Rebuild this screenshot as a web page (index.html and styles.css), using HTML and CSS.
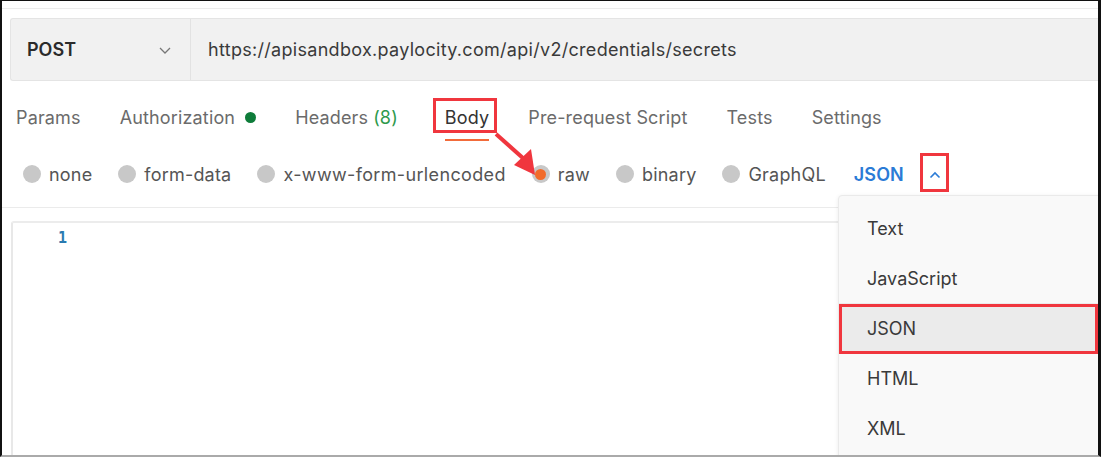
FILE: index.html
```html
<!DOCTYPE html>
<html>
<head>
<meta charset="utf-8">
<link rel="stylesheet" href="styles.css">
</head>
<body>
<div class="frame">
  <div class="topline"></div>
  <div class="urlbar">
    <div class="method">
      <span class="method-name">POST</span>
      <svg class="chev" width="14" height="10" viewBox="0 0 14 10"><path d="M2 3 L7 8 L12 3" fill="none" stroke="#777" stroke-width="1.3"/></svg>
    </div>
    <div class="url">https://apisandbox.paylocity.com/api/v2/credentials/secrets</div>
  </div>
  <div class="tabs">
    <span class="tab">Params</span>
    <span class="tab">Authorization<i class="gdot"></i></span>
    <span class="tab">Headers <span class="green">(8)</span></span>
    <span class="tab active">Body<span class="uline"></span><span class="hl hl-body"></span></span>
    <span class="tab">Pre-request Script</span>
    <span class="tab">Tests</span>
    <span class="tab">Settings</span>
  </div>
  <div class="radios">
    <span class="radio"><i class="rc"></i>none</span>
    <span class="radio"><i class="rc"></i>form-data</span>
    <span class="radio wide"><i class="rc"></i>x-www-form-urlencoded</span>
    <span class="radio"><i class="rc on"></i>raw</span>
    <span class="radio"><i class="rc"></i>binary</span>
    <span class="radio"><i class="rc"></i>GraphQL</span>
    <span class="lang">JSON</span>
    <span class="caret">
      <svg width="14" height="10" viewBox="0 0 14 10"><path d="M2.5 7.5 L7 3 L11.5 7.5" fill="none" stroke="#2b7bd6" stroke-width="1.6"/></svg>
      <span class="hl hl-caret"></span>
    </span>
  </div>
  <div class="sep"></div>
  <div class="editor">
    <span class="ln">1</span>
  </div>
  <div class="menu">
    <div class="item">Text</div>
    <div class="item">JavaScript</div>
    <div class="item sel">JSON<span class="hl hl-json"></span></div>
    <div class="item">HTML</div>
    <div class="item">XML</div>
  </div>
  <svg class="arrow" width="60" height="56" viewBox="0 0 60 56">
    <path d="M14 8 L42 33" stroke="#f0363e" stroke-width="4" fill="none"/>
    <path d="M53 49 L32 39 L49 23 Z" fill="#f0363e"/>
  </svg>
</div>
</body>
</html>
```
FILE: styles.css
```css
* { box-sizing: border-box; }
html, body { margin: 0; padding: 0; background: #fff; }
body { font-family: Inter, "Noto Sans", sans-serif; color: #333; }
.frame {
  position: relative;
  width: 1101px;
  height: 457px;
  border-left: 2px solid #111;
  border-top: 1px solid #111;
  border-right: 3px solid #111;
  border-bottom: 2px solid #aaa;
  overflow: hidden;
}
.topline { height: 5px; border-bottom: 1px solid #ececec; margin-top: 3px; }
.urlbar {
  display: flex;
  margin: 9px 0 0 8px;
  height: 63px;
  background: #f1f1f1;
  border: 1px solid #e4e4e4;
  border-right: none;
  border-radius: 3px 0 0 3px;
}
.method {
  width: 180px;
  display: flex;
  align-items: center;
  justify-content: space-between;
  padding: 0 18px 0 16px;
  border-right: 1px solid #e2e2e2;
}
.method-name { font-weight: 600; font-size: 18px; color: #2b2b2b; }
.chev { margin-top: 1px; }
.url {
  display: flex;
  align-items: center;
  padding-left: 17px;
  font-size: 18px;
  color: #3a3a3a;
  letter-spacing: 0.3px;
}
.tabs {
  display: flex;
  gap: 39px;
  margin: 14px 0 0 14px;
  height: 44px;
  align-items: center;
  font-size: 18px;
  color: #6b6b6b;
  letter-spacing: 0.15px;
}
.tab { position: relative; display: inline-flex; align-items: center; }
.gdot { display: inline-block; width: 11px; height: 11px; border-radius: 50%; background: #0e7c3a; margin-left: 10px; }
.green { color: #2e9a4c; margin-left: 5px; }
.active { color: #333; margin-left: 8px; }
.uline { position: absolute; left: 0; right: 0; bottom: -13px; height: 2px; background: #f26b3a; }
.hl { position: absolute; border: 3px solid #f0363e; pointer-events: none; }
.hl-body { left: -12px; right: -8px; top: -9px; bottom: -5px; }
.radios {
  display: flex;
  align-items: center;
  margin: 20px 0 0 21px;
  height: 30px;
  font-size: 18px;
  color: #555;
  letter-spacing: 0.2px;
}
.radio { display: inline-flex; align-items: center; margin-right: 26px; }
.radio.wide { letter-spacing: 0.35px; }
.rc { display: inline-block; width: 18px; height: 18px; border-radius: 50%; background: #c8c8c8; margin-right: 8px; position: relative; }
.rc.on::after { content: ""; position: absolute; left: 3.5px; top: 3.5px; width: 11px; height: 11px; border-radius: 50%; background: #f26b2a; }
.lang { color: #2b7bd6; font-weight: 600; margin-left: 2px; letter-spacing: 0.1px; }
.caret { position: relative; display: inline-flex; margin-left: 24px; margin-top: 2px; }
.hl-caret { left: -8px; right: -7px; top: -17px; bottom: -12px; }
.sep { margin-top: 18px; height: 1px; background: #ebebeb; }
.editor {
  margin: 13px 0 0 9px;
  height: 240px;
  border-left: 2px solid #e8e8e8;
  border-top: 2px solid #ececec;
  border-radius: 3px 0 0 0;
  padding: 4px 0 0 45px;
}
.ln { font-family: "DejaVu Sans Mono", monospace; font-size: 15px; color: #2a7ab0; font-weight: bold; }
.menu {
  position: absolute;
  left: 836px;
  top: 194px;
  width: 270px;
  height: 270px;
  background: #f9f9f9;
  border: 1px solid #eaeaea;
  border-radius: 4px 0 0 0;
  box-shadow: 0 1px 4px rgba(0,0,0,0.08);
  padding-top: 7px;
}
.item {
  position: relative;
  height: 50px;
  display: flex;
  align-items: center;
  padding-left: 28px;
  font-size: 18px;
  color: #3a3a3a;
}
.item.sel { background: #ebebeb; }
.hl-json { left: 0; right: 9px; top: 1px; bottom: -1px; }
.arrow { position: absolute; left: 480px; top: 125px; }
```
